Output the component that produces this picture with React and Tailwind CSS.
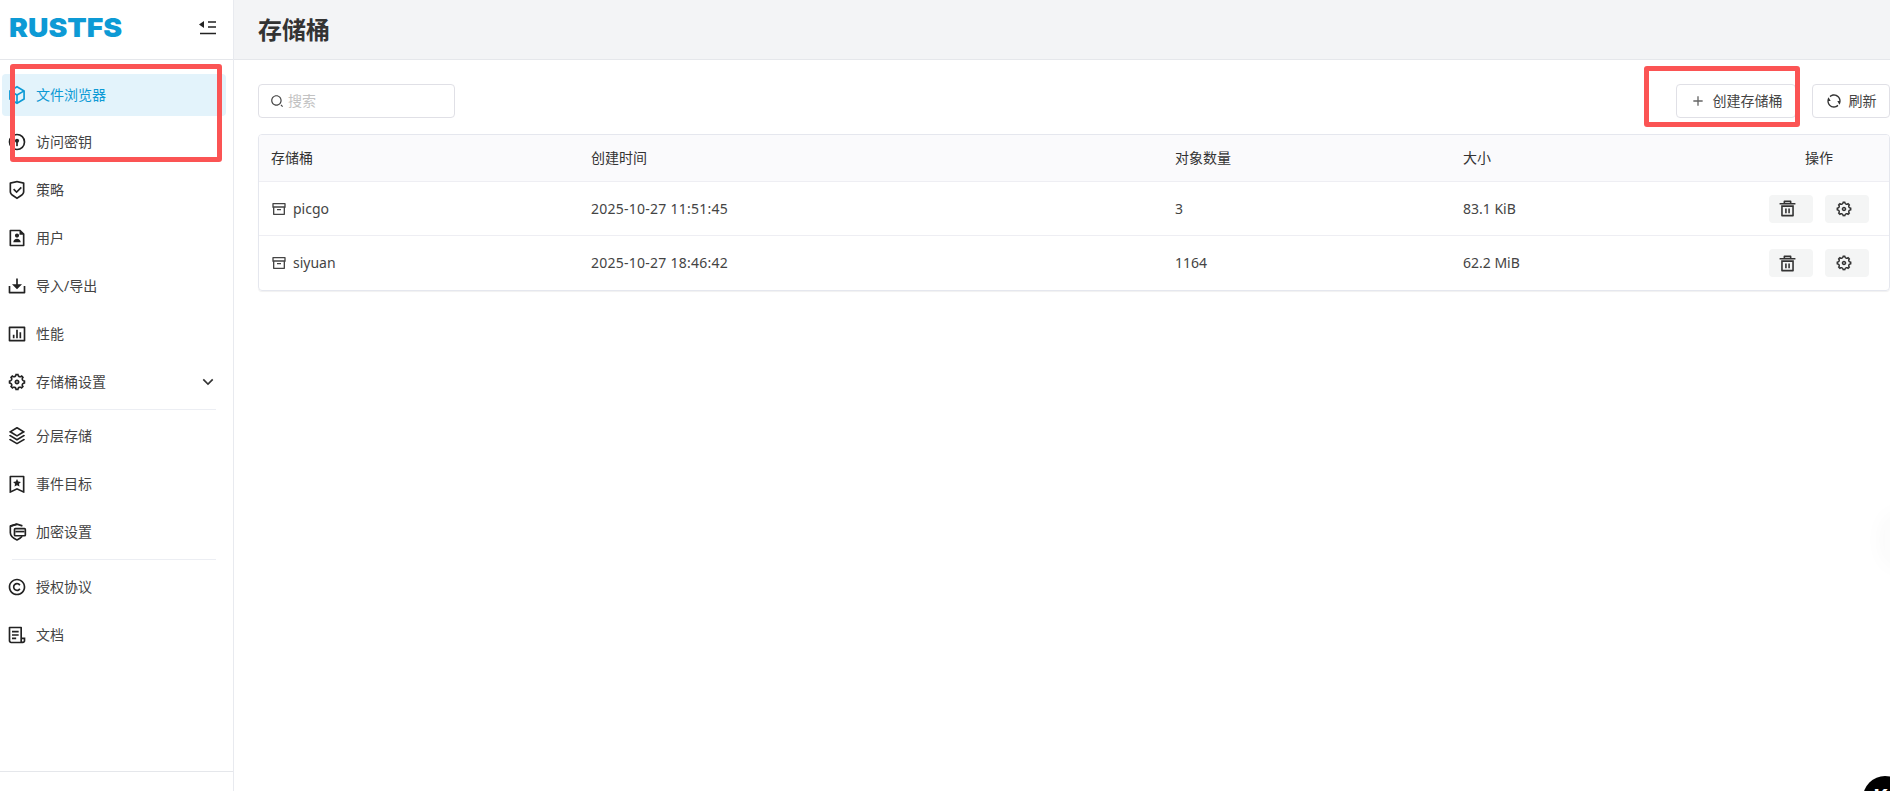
import React from "react";
import {
  RiBox3Line, RiShieldCheckLine, RiFileUserLine, RiDownload2Line,
  RiBarChartBoxLine, RiSettings5Line, RiStackLine, RiBookmark3Line, RiCopyrightLine,
  RiFileList3Line, RiDeleteBin5Line, RiArchiveLine, RiRefreshLine, RiSearch2Line, RiAddLine, RiArrowDownSLine,
} from "react-icons/ri";

const font = "font-['Noto_Sans','Noto_Sans_CJK_SC',sans-serif]";

function KeyholeIcon({ className }) {
  return (
    <svg viewBox="0 0 24 24" fill="none" className={className}>
      <circle cx="12" cy="12" r="9" stroke="currentColor" strokeWidth="2" />
      <circle cx="12" cy="10.5" r="2.5" fill="currentColor" />
      <rect x="11" y="11" width="2" height="6" fill="currentColor" />
    </svg>
  );
}

function ShieldCardIcon({ className }) {
  return (
    <svg viewBox="0 0 24 24" fill="none" className={className}>
      <path d="M12 2.5 4 5v8c0 3.6 3.4 6.6 8 8.5 2.6-1.1 4.8-2.6 6.2-4.4" stroke="currentColor" strokeWidth="2" strokeLinejoin="round" />
      <path d="M4 5l8-2.5L18.5 4.6" stroke="currentColor" strokeWidth="2" />
      <rect x="9" y="8" width="13" height="8.5" rx="1" fill="white" stroke="currentColor" strokeWidth="2" />
      <rect x="10" y="10.5" width="11" height="2" fill="currentColor" />
    </svg>
  );
}

function CollapseIcon({ className }) {
  return (
    <svg viewBox="0 0 18 14" fill="none" className={className}>
      <path d="M5 0v7L0 3.5z" fill="currentColor" />
      <path d="M9 1h8M9 6h8M1 12.5h16" stroke="currentColor" strokeWidth="1.6" />
    </svg>
  );
}

function NavItem({ icon: Icon, label, active, chevron }) {
  return (
    <div className={`ml-0.5 mr-[7px] flex h-[42px] items-center rounded pl-[5px] pr-2 text-sm ${active ? "mb-[5px] bg-[#e3f3fb] text-[#0d9ad5]" : "mb-1.5 text-[#444]"}`}>
      <Icon className={`h-5 w-5 shrink-0 ${active ? "text-[#0d9ad5]" : "text-[#222]"}`} />
      <span className="ml-[9px] flex-1">{label}</span>
      {chevron && <RiArrowDownSLine className="h-5 w-5 text-[#333]" />}
    </div>
  );
}

const rows = [
  ["picgo", "2025-10-27 11:51:45", "3", "83.1 KiB"],
  ["siyuan", "2025-10-27 18:46:42", "1164", "62.2 MiB"],
];

export default function App() {
  return (
    <div className={`relative flex h-[791px] w-[1890px] overflow-hidden bg-white ${font}`}>
      <aside className="flex w-[234px] shrink-0 flex-col border-r border-[#e8eaef] bg-white">
        <div className="flex h-[60px] shrink-0 items-center justify-between border-b border-[#e5e7eb] pb-1 pl-[9px] pr-4">
          <span className="origin-left scale-x-[1.09] font-['Inter',sans-serif] text-[26px] font-black leading-none text-[#0d9ad5]">RUSTFS</span>
          <CollapseIcon className="h-[14px] w-[18px] text-[#222]" />
        </div>
        <nav className="flex-1 pt-[14px]">
          <NavItem icon={RiBox3Line} label="文件浏览器" active />
          <NavItem icon={KeyholeIcon} label="访问密钥" />
          <NavItem icon={RiShieldCheckLine} label="策略" />
          <NavItem icon={RiFileUserLine} label="用户" />
          <NavItem icon={RiDownload2Line} label="导入/导出" />
          <NavItem icon={RiBarChartBoxLine} label="性能" />
          <NavItem icon={RiSettings5Line} label="存储桶设置" chevron />
          <div className="ml-3 mr-[17px] mb-[5px] mt-[3px] h-px bg-[#eceef3]" />
          <NavItem icon={RiStackLine} label="分层存储" />
          <NavItem icon={RiBookmark3Line} label="事件目标" />
          <NavItem icon={ShieldCardIcon} label="加密设置" />
          <div className="ml-3 mr-[17px] mb-1.5 h-px bg-[#eceef3]" />
          <NavItem icon={RiCopyrightLine} label="授权协议" />
          <NavItem icon={RiFileList3Line} label="文档" />
        </nav>
        <div className="h-5 shrink-0 border-t border-[#e5e7eb]" />
      </aside>

      <main className="flex min-w-0 flex-1 flex-col">
        <header className="flex h-[60px] shrink-0 items-center border-b border-[#e5e7eb] bg-[#f3f4f6] pl-6">
          <h1 className="text-2xl font-semibold text-[#333]">存储桶</h1>
        </header>
        <div className="pl-6 pt-6">
          <div className="flex h-[34px] items-center justify-between">
            <div className="flex h-[34px] w-[197px] items-center rounded border border-[#e0e0e6] pl-[11px] text-sm text-[#c2c2c2]">
              <RiSearch2Line className="mr-1 h-[14px] w-[14px] text-[#444]" />
              搜索
            </div>
            <div className="flex items-center gap-4">
              <div className="flex h-[34px] w-[120px] items-center justify-center gap-[7px] rounded border border-[#e0e0e6] text-sm text-[#444]">
                <RiAddLine className="h-4 w-4 text-[#666]" />
                创建存储桶
              </div>
              <div className="flex h-[34px] w-[78px] items-center justify-center gap-[7px] rounded border border-[#e0e0e6] text-sm text-[#444]">
                <RiRefreshLine className="h-4 w-4 text-[#333]" />
                刷新
              </div>
            </div>
          </div>
          <div className="mt-4 overflow-hidden rounded border border-[#e5e7ee] text-sm text-[#444] shadow-[0_1px_1px_rgba(0,0,0,0.06)]">
            <div className="grid h-[47px] grid-cols-[320px_584px_288px_1fr_140px] items-center border-b border-[#eeeef3] bg-[#fafafc] text-[#333]">
              <div className="pl-3">存储桶</div>
              <div className="pl-3">创建时间</div>
              <div className="pl-3">对象数量</div>
              <div className="pl-3">大小</div>
              <div className="text-center">操作</div>
            </div>
            {rows.map((r, i) => (
              <div key={r[0]} className={`grid h-[54px] grid-cols-[320px_584px_288px_1fr_140px] items-center ${i === 0 ? "border-b border-[#eeeef3]" : ""}`}>
                <div className="flex items-center gap-[6px] pl-3">
                  <RiArchiveLine className="h-4 w-4 text-[#444]" />
                  {r[0]}
                </div>
                <div className="pl-3 tracking-[0.25px]">{r[1]}</div>
                <div className="pl-3">{r[2]}</div>
                <div className="pl-3">{r[3]}</div>
                <div className="flex justify-center gap-3">
                  <div className="flex h-7 w-11 items-center justify-center rounded bg-[#f4f5f5] pr-[7px]">
                    <RiDeleteBin5Line className="h-[19px] w-[19px] text-[#333]" />
                  </div>
                  <div className="flex h-7 w-11 items-center justify-center rounded bg-[#f4f5f5] pr-[6px]">
                    <RiSettings5Line className="h-[18px] w-[18px] text-[#333]" />
                  </div>
                </div>
              </div>
            ))}
          </div>
        </div>
      </main>

      {/* annotation boxes */}
      <div className="absolute left-[10px] top-[64px] h-[98px] w-[212px] rounded-[3px] border-[5px] border-[#fb5454]" />
      <div className="absolute left-[1644px] top-[66px] h-[61px] w-[156px] rounded-[3px] border-[5px] border-[#fb5454]" />

      {/* floating widget */}
      <div className="absolute left-[1863px] top-[776px] h-[44px] w-[44px] rounded-full bg-black pl-[10px] pt-[8px] text-[22px] font-bold leading-none text-white">K</div>
      <div className="absolute left-[1885px] top-[515px] h-[50px] w-[30px] rounded-full bg-[#fcfcfc] shadow-[0_0_24px_rgba(0,0,0,0.04)]" />
    </div>
  );
}
